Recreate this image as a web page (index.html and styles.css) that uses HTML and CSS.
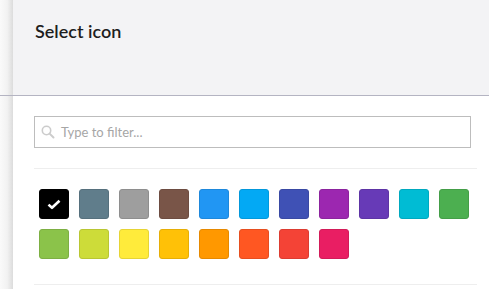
FILE: index.html
```html
<!DOCTYPE html>
<html>
<head>
<meta charset="utf-8">
<link rel="stylesheet" href="styles.css">
</head>
<body>
<div class="page">
  <div class="backdrop"><div class="backdrop-head"></div></div>
  <div class="panel">
    <div class="header"><h1 class="title">Select icon</h1></div>
    <div class="body">
      <div class="search">
        <svg class="search-icon" width="14" height="14" viewBox="0 0 14 14"><circle cx="5.5" cy="5.5" r="4.2" fill="none" stroke="#cccccc" stroke-width="1.6"/><line x1="8.6" y1="8.6" x2="12.5" y2="12.5" stroke="#cccccc" stroke-width="2" stroke-linecap="round"/></svg>
        <span class="placeholder">Type to filter...</span>
      </div>
      <div class="sep"></div>
      <div class="swatches">
        <div class="sw sel" style="background:#000;border-color:#000"><svg width="14" height="11" viewBox="0 0 14 11"><path d="M1.5 5.6 L5 8.8 L12.5 1.8" fill="none" stroke="#fff" stroke-width="2.6" stroke-linejoin="round"/></svg></div>
        <div class="sw" style="background:#607d8b;border-color:#56707d"></div>
        <div class="sw" style="background:#9e9e9e;border-color:#8e8e8e"></div>
        <div class="sw" style="background:#795548;border-color:#6d4c41"></div>
        <div class="sw" style="background:#2196f3;border-color:#1e88db"></div>
        <div class="sw" style="background:#03a9f4;border-color:#0398db"></div>
        <div class="sw" style="background:#3f51b5;border-color:#3949a3"></div>
        <div class="sw" style="background:#9c27b0;border-color:#8c239e"></div>
        <div class="sw" style="background:#673ab7;border-color:#5d34a5"></div>
        <div class="sw" style="background:#00bcd4;border-color:#00a9bf"></div>
        <div class="sw" style="background:#4caf50;border-color:#449e48"></div>
        <div class="sw" style="background:#8bc34a;border-color:#7daf43"></div>
        <div class="sw" style="background:#cddc39;border-color:#b9c633"></div>
        <div class="sw" style="background:#ffeb3b;border-color:#e6d435"></div>
        <div class="sw" style="background:#ffc107;border-color:#e6ae06"></div>
        <div class="sw" style="background:#ff9800;border-color:#e68900"></div>
        <div class="sw" style="background:#ff5722;border-color:#e64e1f"></div>
        <div class="sw" style="background:#f44336;border-color:#dc3c31"></div>
        <div class="sw" style="background:#e91e63;border-color:#d21b59"></div>
      </div>
      <div class="sep bottom"></div>
    </div>
  </div>
</div>
</body>
</html>
```
FILE: styles.css
```css
html, body {
  margin: 0;
  padding: 0;
  background: #fff;
  overflow: hidden;
}
.page {
  display: flex;
  width: 489px;
  height: 289px;
  font-family: Lato, "Liberation Sans", sans-serif;
}
.backdrop {
  width: 13px;
  flex: none;
  background: linear-gradient(to right, #fafafa 0%, #f2f2f2 55%, #dcdcdc 100%);
}
.backdrop-head {
  height: 95px;
  border-bottom: 1px solid #b4b4c2;
}
.panel {
  flex: 1;
  background: #fff;
  display: flex;
  flex-direction: column;
}
.header {
  height: 95px;
  background: #f3f3f5;
  border-bottom: 1px solid #b4b4c2;
  padding: 0 0 0 22px;
  box-sizing: content-box;
}
.title {
  margin: 0;
  padding-top: 20px;
  font-size: 18px;
  line-height: 22px;
  font-weight: 600;
  color: #1e1e1e;
}
.body {
  padding: 20px 12px 0 21px;
}
.search {
  width: 437px;
  height: 32px;
  box-sizing: border-box;
  border: 1px solid #bdbdbd;
  display: flex;
  align-items: center;
  padding-left: 6px;
  gap: 6px;
}
.search-icon {
  flex: none;
}
.placeholder {
  font-size: 13px;
  color: #a6a6a6;
}
.sep {
  height: 1px;
  background: #eeeeee;
  margin-top: 20px;
}
.swatches {
  display: flex;
  flex-wrap: wrap;
  gap: 10px;
  padding: 20px 0 0 5px;
}
.sw {
  width: 30px;
  height: 30px;
  box-sizing: border-box;
  border: 1px solid;
  border-radius: 3px;
  display: flex;
  align-items: center;
  justify-content: center;
}
.sep.bottom {
  margin-top: 25px;
}
```
